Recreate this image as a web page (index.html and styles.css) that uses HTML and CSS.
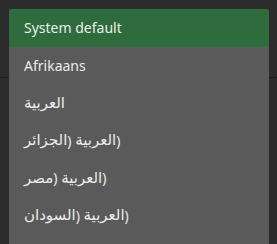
FILE: index.html
```html
<!DOCTYPE html>
<html>
<head>
<meta charset="utf-8">
<link rel="stylesheet" href="styles.css">
</head>
<body>
<div class="menu">
  <div class="item selected">System default</div>
  <div class="item">Afrikaans</div>
  <div class="item"><span class="ar" dir="rtl">العربية</span></div>
  <div class="item"><span class="ar" dir="rtl">الجزائر</span>) <span class="ar" dir="rtl">العربية</span>)</div>
  <div class="item"><span class="ar" dir="rtl">مصر</span>) <span class="ar" dir="rtl">العربية</span>)</div>
  <div class="item"><span class="ar" dir="rtl">السودان</span>) <span class="ar" dir="rtl">العربية</span>)</div>
</div>
</body>
</html>
```

FILE: styles.css
```css
html, body {
  margin: 0;
  padding: 0;
  height: 100%;
  overflow: hidden;
}
html {
  background: linear-gradient(#1d1d1d, #1d1d1d) no-repeat 0 77px / 100% 1px, #2b2b2c;
}
body {
  padding: 9px 0 0 9px;
  box-sizing: border-box;
  font-family: "Noto Sans", "DejaVu Sans", sans-serif;
}
.menu {
  width: 260px;
  height: 100%;
  background: #5a5a5a;
  border-radius: 3px 3px 0 0;
  overflow: hidden;
}
.item {
  height: 37.5px;
  display: flex;
  align-items: center;
  padding-left: 15px;
  font-size: 14px;
  color: #ececec;
  white-space: pre;
}
.ar {
  font-family: "DejaVu Sans", sans-serif;
  font-size: 15px;
}
.selected {
  background: #2e6c3d;
}
```
